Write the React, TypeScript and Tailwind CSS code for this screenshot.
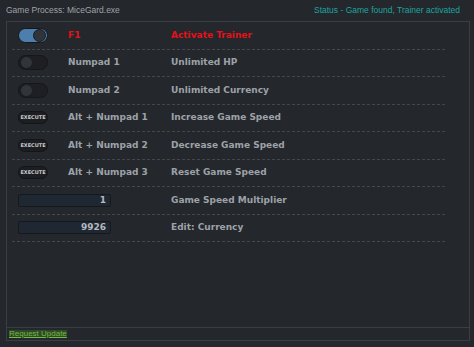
import React from 'react';

type Kind = 'on' | 'off' | 'exec' | 'input';

interface Row {
  kind: Kind;
  key?: string;
  value?: string;
  label: string;
  active?: boolean;
}

const rows: Row[] = [
  { kind: 'on', key: 'F1', label: 'Activate Trainer', active: true },
  { kind: 'off', key: 'Numpad 1', label: 'Unlimited HP' },
  { kind: 'off', key: 'Numpad 2', label: 'Unlimited Currency' },
  { kind: 'exec', key: 'Alt + Numpad 1', label: 'Increase Game Speed' },
  { kind: 'exec', key: 'Alt + Numpad 2', label: 'Decrease Game Speed' },
  { kind: 'exec', key: 'Alt + Numpad 3', label: 'Reset Game Speed' },
  { kind: 'input', value: '1', label: 'Game Speed Multiplier' },
  { kind: 'input', value: '9926', label: 'Edit: Currency' },
];

const Toggle = ({ on }: { on: boolean }) => (
  <div
    className={`flex h-[15px] w-[30px] items-center rounded-full border border-[#15171a] p-[1px] ${
      on ? 'justify-end bg-[#4d7fae]' : 'justify-start bg-[#1d1f22]'
    }`}
  >
    <div className="h-[13px] w-[13px] rounded-full border border-[#1a1c1f] bg-[#313438]" />
  </div>
);

const Control = ({ row }: { row: Row }) => {
  if (row.kind === 'on' || row.kind === 'off') return <Toggle on={row.kind === 'on'} />;
  if (row.kind === 'exec')
    return (
      <div className="flex h-[13px] w-[30px] items-center justify-center rounded-full border border-[#131517] bg-[#1c1e21] text-[5px] leading-none text-[#c8cbcf]">
        EXECUTE
      </div>
    );
  return (
    <div className="flex h-[13px] w-[93px] items-center justify-end rounded-[2px] border border-[#15191e] bg-[#1e2732] pr-[4px] text-[9px] text-[#b4b9bf]">
      {row.value}
    </div>
  );
};

export default function App() {
  return (
    <div
      className="flex h-[347px] w-[474px] flex-col bg-[#24272c] text-[#9da2a8]"
      style={{ fontFamily: 'Tahoma, "DejaVu Sans", sans-serif' }}
    >
      {/* header */}
      <div
        className="flex h-[21px] items-center justify-between px-[6px] text-[8.5px]"
        style={{ fontFamily: '"Liberation Sans", Arial, sans-serif' }}
      >
        <span className="text-[#9ea3a9]">Game Process: MiceGard.exe</span>
        <span className="pr-[8px] text-[#1ea49f]">Status - Game found, Trainer activated</span>
      </div>

      {/* options panel */}
      <div className="ml-[6px] mr-[4px] flex flex-1 flex-col border-x border-t border-[#3a3e44]">
        <div className="flex flex-col pl-[5px] pr-[24px]">
          {rows.map((row, i) => (
            <div
              key={i}
              className="flex h-[27.5px] items-center border-b border-dashed border-[#43474d] text-[9px] font-bold"
            >
              <div className="w-[56px] pl-[6px]">
                <Control row={row} />
              </div>
              <div className={`w-[103px] ${row.active ? 'text-[#e3121b]' : ''}`}>{row.key}</div>
              <div className={row.active ? 'text-[#e3121b]' : ''}>{row.label}</div>
            </div>
          ))}
        </div>
      </div>

      {/* footer */}
      <div className="ml-[6px] mr-[4px] flex h-[14px] items-center border-x border-y border-[#3a3e44] px-[2px]">
        <span
          className="bg-[#2f4a2a] text-[8px] leading-none text-[#74b83f] underline"
          style={{ fontFamily: '"Liberation Sans", Arial, sans-serif' }}
        >
          Request Update
        </span>
      </div>
      <div className="h-[6px]" />
    </div>
  );
}
